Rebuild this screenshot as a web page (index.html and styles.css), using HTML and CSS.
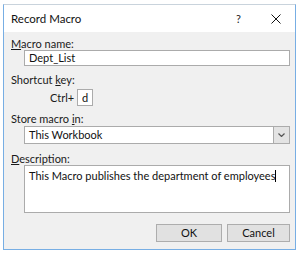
FILE: index.html
```html
<!DOCTYPE html>
<html>
<head>
<meta charset="utf-8">
<link rel="stylesheet" href="styles.css">
</head>
<body>
<div class="dialog">
  <div class="titlebar">
    <span class="title">Record Macro</span>
    <span class="help">?</span>
    <svg class="close" width="10" height="10" viewBox="0 0 10 10"><path d="M0.5 0.5 L9.5 9.5 M9.5 0.5 L0.5 9.5" stroke="#111" stroke-width="1" fill="none"/></svg>
  </div>
  <div class="content">
    <div class="label"><u>M</u>acro name:</div>
    <div class="field name">Dept_List</div>
    <div class="label gap7">Shortcut <u>k</u>ey:</div>
    <div class="shortcut">
      <span class="ctrl">Ctrl+</span>
      <span class="keybox">d</span>
    </div>
    <div class="label gap6">Store macro <u>i</u>n:</div>
    <div class="combo">
      <span class="combo-text">This Workbook</span>
      <span class="combo-btn"><svg width="7" height="4" viewBox="0 0 7 4"><path d="M0.5 0.5 L3.5 3.5 L6.5 0.5" stroke="#555" stroke-width="1.2" fill="none"/></svg></span>
    </div>
    <div class="label gap8"><u>D</u>escription:</div>
    <div class="field desc">This Macro publishes the department of employees<span class="caret"></span></div>
    <div class="buttons">
      <div class="btn ok">OK</div>
      <div class="btn cancel">Cancel</div>
    </div>
  </div>
</div>
</body>
</html>
```
FILE: styles.css
```css
html, body {
  margin: 0;
  padding: 0;
  background: #ffffff;
}
body {
  font-family: "Lato", "Noto Sans", sans-serif;
  font-size: 11px;
  color: #1a1a1a;
}
.dialog {
  margin: 4px 0 0 3px;
  width: 293px;
  height: 246px;
  box-sizing: border-box;
  border: 1px solid #77aee4;
  border-top-color: #c9d3dc;
  background: #f0f0f0;
  display: flex;
  flex-direction: column;
}
.titlebar {
  height: 27px;
  background: #ffffff;
  display: flex;
  align-items: center;
  padding-left: 7px;
  flex: none;
}
.title {
  font-size: 11.5px;
  color: #111;
  flex: 1;
}
.help {
  font-size: 11px;
  color: #222;
  margin-right: 30px;
}
.close {
  margin-right: 14px;
}
.content {
  display: flex;
  flex-direction: column;
  padding: 5px 0 0 7px;
}
.label {
  line-height: 13px;
  height: 13px;
}
.label u {
  text-decoration-thickness: 1px;
  text-underline-offset: 1px;
}
.gap7 { margin-top: 7px; }
.gap6 { margin-top: 6px; }
.gap8 { margin-top: 8px; }
.field {
  margin-left: 13px;
  width: 266px;
  box-sizing: border-box;
  border: 1px solid #ababab;
  background: #ffffff;
  padding-left: 4px;
  color: #111;
  white-space: nowrap;
}
.name {
  height: 16px;
  line-height: 14px;
}
.shortcut {
  display: flex;
  align-items: center;
  margin-top: 3px;
  margin-left: 39px;
  height: 17px;
}
.ctrl {
  width: 27px;
}
.keybox {
  width: 16px;
  height: 17px;
  box-sizing: border-box;
  border: 1px solid #ababab;
  background: #fff;
  padding-left: 4px;
  line-height: 15px;
  color: #111;
}
.combo {
  margin-left: 13px;
  margin-top: 1px;
  width: 266px;
  height: 18px;
  box-sizing: border-box;
  border: 1px solid #ababab;
  background: #fff;
  display: flex;
}
.combo-text {
  flex: 1;
  padding-left: 4px;
  line-height: 16px;
  color: #111;
}
.combo-btn {
  width: 15px;
  background: #e3e3e3;
  border-left: 1px solid #ababab;
  display: flex;
  align-items: center;
  justify-content: center;
}
.desc {
  height: 48px;
  line-height: 14px;
  padding-top: 3px;
}
.caret {
  display: inline-block;
  width: 1px;
  height: 12px;
  background: #000;
  vertical-align: -2px;
}
.buttons {
  display: flex;
  justify-content: flex-end;
  gap: 5px;
  margin-top: 11px;
  margin-right: 5px;
}
.btn {
  height: 18px;
  box-sizing: border-box;
  border: 1px solid #adadad;
  background: #e1e1e1;
  text-align: center;
  line-height: 16px;
  color: #111;
}
.ok { width: 66px; }
.cancel { width: 63px; }
```
